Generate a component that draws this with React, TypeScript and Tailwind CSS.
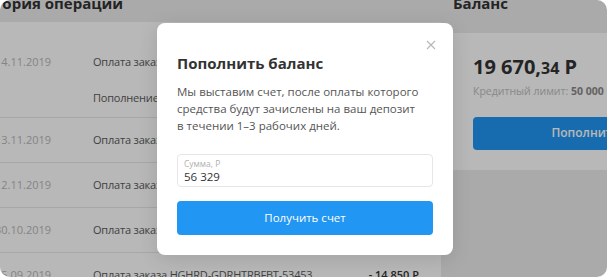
import React from 'react';

interface Entry {
    title: string;
    amount: string;
}

interface Row {
    date: string;
    entries: Entry[];
}

const rows: Row[] = [
    {
        date: '14.11.2019',
        entries: [
            { title: 'Оплата заказа HGHRD-GDRHTRBFBT-53453..', amount: '- 14 850 Р' },
            { title: 'Пополнение баланса', amount: '+ 50 000 Р' },
        ],
    },
    { date: '13.11.2019', entries: [{ title: 'Оплата заказа HGHRD-GDRHTRBFBT-53453..', amount: '- 14 850 Р' }] },
    { date: '12.11.2019', entries: [{ title: 'Оплата заказа HGHRD-GDRHTRBFBT-53453..', amount: '- 14 850 Р' }] },
    { date: '30.10.2019', entries: [{ title: 'Оплата заказа HGHRD-GDRHTRBFBT-53453..', amount: '- 14 850 Р' }] },
    { date: '15.09.2019', entries: [{ title: 'Оплата заказа HGHRD-GDRHTRBFBT-53453..', amount: '- 14 850 Р' }] },
];

function HistoryCard() {
    return (
        <div className="flex flex-col w-[467px] shrink-0">
            <h2 className="mt-[-4px] text-[15px] leading-none font-bold text-[#333] whitespace-nowrap">
                История операции
            </h2>
            <div className="mt-[11px] bg-white pl-[21px] pr-[22px] pt-[18px]">
                {rows.map((row, i) => (
                    <div key={i} className="flex border-b border-[#e8e8e8]">
                        <div className="w-[98px] shrink-0 h-[44px] flex items-center text-[11px] text-[#b8b8b8]">
                            {row.date}
                        </div>
                        <div className="flex-1 flex flex-col">
                            {row.entries.map((e, j) => (
                                <div
                                    key={j}
                                    className={`flex items-center justify-between text-[11px] ${j === 0 ? 'h-[44px]' : 'h-[33px] pb-[4px]'}`}
                                >
                                    <span className="text-[#5a5a5a] whitespace-nowrap tracking-[-0.2px]">{e.title}</span>
                                    <span className="font-semibold text-[#333] whitespace-nowrap">{e.amount}</span>
                                </div>
                            ))}
                        </div>
                    </div>
                ))}
            </div>
        </div>
    );
}

function BalanceCard() {
    return (
        <div className="flex flex-col w-[310px] shrink-0 ml-[12px]">
            <h2 className="mt-[-4px] text-[15px] leading-none font-bold text-[#333] whitespace-nowrap">Баланс</h2>
            <div className="mt-[22px] bg-white px-[20px] pt-[24px] pb-[20px]">
                <div className="text-[#333] font-bold leading-none whitespace-nowrap">
                    <span className="text-[20px]">19 670,</span>
                    <span className="text-[16px]">34</span>
                    <span className="text-[20px]"> Р</span>
                </div>
                <div className="mt-[9px] text-[10.5px] leading-none whitespace-nowrap">
                    <span className="text-[#bdbdbd]">Кредитный лимит: </span>
                    <span className="font-bold text-[#888]">50 000 Р</span>
                </div>
                <button className="mt-[20px] w-full h-[33px] rounded-[4px] bg-[#2196f3] text-white text-[12px] font-semibold">
                    Пополнить баланс
                </button>
            </div>
        </div>
    );
}

function TopUpModal() {
    return (
        <div className="absolute left-[157px] top-[23px] w-[296px] h-[232px] bg-white rounded-[8px] shadow-[0_4px_20px_rgba(0,0,0,0.12)] px-[20px] pt-[29px]">
            <button className="absolute right-[17px] top-[17px] w-[10px] h-[10px] text-[#b8b8b8]">
                <svg viewBox="0 0 10 10" className="w-[10px] h-[10px]" fill="none" stroke="currentColor" strokeWidth="1.2">
                    <path d="M1 1l8 8M9 1l-8 8" />
                </svg>
            </button>
            <h3 className="text-[15px] leading-[22px] font-bold text-[#333]">Пополнить баланс</h3>
            <p className="mt-[9px] text-[11.5px] leading-[17px] text-[#555]">
                Мы выставим счет, после оплаты которого
                <br />
                средства будут зачислены на ваш депозит
                <br />
                в течении 1–3 рабочих дней.
            </p>
            <div className="mt-[20px] h-[33px] border border-[#e6e6e6] rounded-[4px] px-[6px] pt-[3px]">
                <div className="text-[8.5px] leading-[11px] text-[#b0b0b0]">Сумма, Р</div>
                <div className="text-[11.5px] leading-[15px] text-[#333]">56 329</div>
            </div>
            <button className="mt-[14px] w-full h-[34px] rounded-[4px] bg-[#2196f3] text-white text-[11.5px] font-medium">
                Получить счет
            </button>
        </div>
    );
}

export default function App() {
    return (
        <div className="w-[610px] h-[280px] bg-white overflow-hidden" style={{ fontFamily: '"Open Sans", "Noto Sans", sans-serif' }}>
            <div className="relative w-[607px] h-[277px] rounded-[10px] overflow-hidden bg-[#ececec]">
                <div className="flex ml-[-26px]">
                    <HistoryCard />
                    <BalanceCard />
                </div>
                <div className="absolute inset-0 bg-black/[0.28]" />
                <TopUpModal />
            </div>
        </div>
    );
}
